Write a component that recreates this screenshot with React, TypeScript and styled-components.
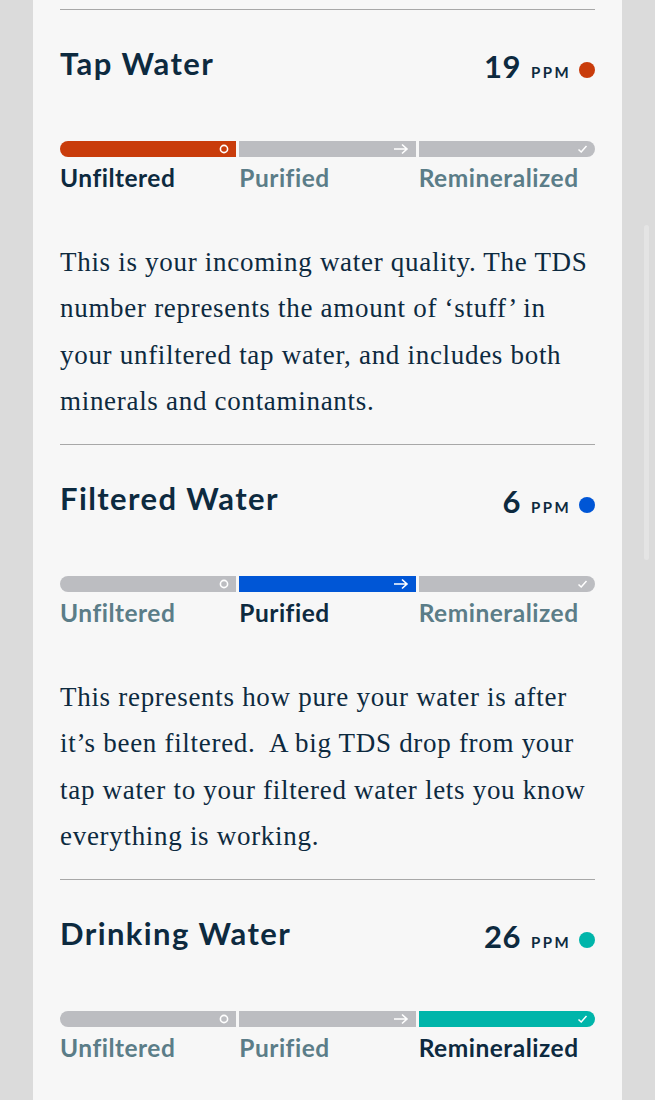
import React from 'react';
import styled, { createGlobalStyle } from 'styled-components';

type Stage = 0 | 1 | 2;

interface Reading {
  title: string;
  ppm: number;
  color: string;
  stage: Stage;
  text?: string;
}

const readings: Reading[] = [
  {
    title: 'Tap Water',
    ppm: 19,
    color: '#c93c0b',
    stage: 0,
    text: 'This is your incoming water quality. The TDS number represents the amount of \u2018stuff\u2019 in your unfiltered tap water, and includes both minerals and contaminants.',
  },
  {
    title: 'Filtered Water',
    ppm: 6,
    color: '#0056d6',
    stage: 1,
    text: 'This represents how pure your water is after it\u2019s been filtered.\u00a0 A big TDS drop from your tap water to your filtered water lets you know everything is working.',
  },
  {
    title: 'Drinking Water',
    ppm: 26,
    color: '#00b5aa',
    stage: 2,
  },
];

const stages = ['Unfiltered', 'Purified', 'Remineralized'];

const GlobalStyle = createGlobalStyle`
  html, body {
    margin: 0;
    padding: 0;
    background: #dbdbdb;
    overflow: hidden;
  }
`;

const Page = styled.div`
  width: 655px;
  height: 1100px;
  overflow: hidden;
`;

const Card = styled.main`
  margin-left: 33px;
  width: 589px;
  box-sizing: border-box;
  padding: 9px 27px 0;
  min-height: 1100px;
  background: #f7f7f7;
`;

const Section = styled.section`
  border-top: 1px solid #a8a8a8;
  padding: 35px 0 20px;
`;

const Header = styled.div`
  display: flex;
  align-items: center;
  justify-content: space-between;
  height: 36px;
`;

const Title = styled.h2`
  margin: 0;
  font-family: Lato, 'Open Sans', sans-serif;
  font-weight: 700;
  font-size: 31px;
  line-height: 36px;
  letter-spacing: 1.4px;
  color: #0d2a3f;
`;

const Value = styled.div`
  display: flex;
  align-items: baseline;
  font-family: Lato, 'Open Sans', sans-serif;
  color: #0d2a3f;
  padding-top: 6px;
`;

const Number = styled.span`
  font-size: 31px;
  font-weight: 700;
  line-height: 36px;
  letter-spacing: 0.5px;
`;

const Unit = styled.span`
  margin-left: 10px;
  font-size: 15px;
  font-weight: 700;
  letter-spacing: 2.4px;
`;

const Dot = styled.span<{ $color: string }>`
  align-self: center;
  margin-left: 8px;
  margin-top: 8px;
  width: 16px;
  height: 16px;
  border-radius: 50%;
  background: ${({ $color }) => $color};
`;

const Bar = styled.div`
  margin-top: 60px;
  display: grid;
  grid-template-columns: 1fr 1fr 1fr;
  column-gap: 3px;
  height: 16px;
  border-radius: 8px;
  overflow: hidden;
`;

const Segment = styled.div<{ $fill: string }>`
  display: flex;
  align-items: center;
  justify-content: flex-end;
  padding-right: 7px;
  background: ${({ $fill }) => $fill};
  color: #ffffff;
`;

const Labels = styled.div`
  margin-top: 8px;
  display: grid;
  grid-template-columns: 1fr 1fr 1fr;
  column-gap: 3px;
`;

const Label = styled.span<{ $active: boolean }>`
  font-family: Lato, 'Open Sans', sans-serif;
  font-weight: 700;
  font-size: 24.5px;
  line-height: 26px;
  letter-spacing: 0.5px;
  white-space: nowrap;
  color: ${({ $active }) => ($active ? '#0d2a3f' : '#5b7d88')};
`;

const Body = styled.p`
  margin: 48px 0 0;
  font-family: 'Liberation Serif', 'Times New Roman', serif;
  font-size: 27px;
  line-height: 46.3px;
  letter-spacing: 0.7px;
  color: #0d2a3f;
`;

const Scrollbar = styled.div`
  position: fixed;
  top: 225px;
  left: 644px;
  width: 5px;
  height: 335px;
  border-radius: 3px;
  background: #e4e4e4;
`;

const StageIcon = ({ index }: { index: number }) => {
  if (index === 0) {
    return (
      <svg width="10" height="10" viewBox="0 0 10 10">
        <circle cx="5" cy="5" r="3.6" fill="none" stroke="currentColor" strokeWidth="1.6" />
      </svg>
    );
  }
  if (index === 1) {
    return (
      <svg width="16" height="12" viewBox="0 0 16 12">
        <path d="M1 6h13M9 1.5 14 6l-5 4.5" fill="none" stroke="currentColor" strokeWidth="1.6" />
      </svg>
    );
  }
  return (
    <svg width="11" height="10" viewBox="0 0 11 10">
      <path d="M1.5 5.5 4.2 8 9.5 2" fill="none" stroke="currentColor" strokeWidth="1.5" />
    </svg>
  );
};

const ReadingSection = ({ reading }: { reading: Reading }) => (
  <Section>
    <Header>
      <Title>{reading.title}</Title>
      <Value>
        <Number>{reading.ppm}</Number>
        <Unit>PPM</Unit>
        <Dot $color={reading.color} />
      </Value>
    </Header>
    <Bar>
      {stages.map((s, i) => (
        <Segment key={s} $fill={i === reading.stage ? reading.color : '#bcbdc1'}>
          <StageIcon index={i} />
        </Segment>
      ))}
    </Bar>
    <Labels>
      {stages.map((s, i) => (
        <Label key={s} $active={i === reading.stage}>{s}</Label>
      ))}
    </Labels>
    {reading.text && <Body>{reading.text}</Body>}
  </Section>
);

export default function App() {
  return (
    <Page>
      <GlobalStyle />
      <Card>
        {readings.map(r => (
          <ReadingSection key={r.title} reading={r} />
        ))}
      </Card>
      <Scrollbar />
    </Page>
  );
}
